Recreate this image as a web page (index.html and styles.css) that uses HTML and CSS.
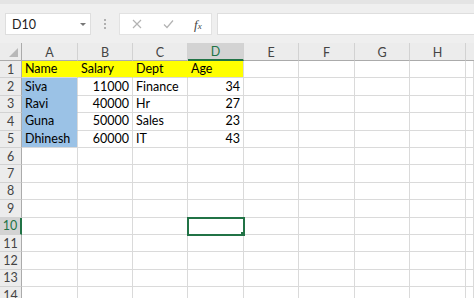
FILE: index.html
```html
<!DOCTYPE html>
<html>
<head>
<meta charset="utf-8">
<link rel="stylesheet" href="styles.css">
</head>
<body>
<div class="app">
  <div class="fbar">
    <div class="namebox"><span class="nb-text">D10</span><span class="nb-arrow"></span></div>
    <div class="grip"><i></i><i></i><i></i></div>
    <div class="fbtns">
      <svg class="ico" width="10" height="10" viewBox="0 0 10 10"><path d="M1 1L9 9M9 1L1 9" stroke="#b3b3b3" stroke-width="1.2" fill="none"/></svg>
      <svg class="ico" width="11" height="10" viewBox="0 0 11 10"><path d="M1 5.5L4 8.5L10 1.5" stroke="#b3b3b3" stroke-width="1.2" fill="none"/></svg>
      <span class="fx"><span class="fx-f">f</span><span class="fx-x">x</span></span>
    </div>
    <div class="finput"></div>
  </div>
  <div class="sheet">
    <div class="hd corner"><svg width="9" height="9" viewBox="0 0 9 9"><polygon points="9,0 9,9 0,9" fill="#b8b8b8"/></svg></div>
    <div class="hd col">A</div><div class="hd col">B</div><div class="hd col">C</div><div class="hd col sel">D</div><div class="hd col">E</div><div class="hd col">F</div><div class="hd col">G</div><div class="hd col">H</div><div class="hd col last"></div>

    <div class="hd row">1</div>
    <div class="c y">Name</div><div class="c y">Salary</div><div class="c y">Dept</div><div class="c y ye">Age</div><div class="c"></div><div class="c"></div><div class="c"></div><div class="c"></div><div class="c"></div>

    <div class="hd row">2</div>
    <div class="c b">Siva</div><div class="c n">11000</div><div class="c">Finance</div><div class="c n">34</div><div class="c"></div><div class="c"></div><div class="c"></div><div class="c"></div><div class="c"></div>

    <div class="hd row">3</div>
    <div class="c b">Ravi</div><div class="c n">40000</div><div class="c">Hr</div><div class="c n">27</div><div class="c"></div><div class="c"></div><div class="c"></div><div class="c"></div><div class="c"></div>

    <div class="hd row">4</div>
    <div class="c b">Guna</div><div class="c n">50000</div><div class="c">Sales</div><div class="c n">23</div><div class="c"></div><div class="c"></div><div class="c"></div><div class="c"></div><div class="c"></div>

    <div class="hd row">5</div>
    <div class="c b be">Dhinesh</div><div class="c n">60000</div><div class="c">IT</div><div class="c n">43</div><div class="c"></div><div class="c"></div><div class="c"></div><div class="c"></div><div class="c"></div>

    <div class="hd row">6</div>
    <div class="c"></div><div class="c"></div><div class="c"></div><div class="c"></div><div class="c"></div><div class="c"></div><div class="c"></div><div class="c"></div><div class="c"></div>
    <div class="hd row">7</div>
    <div class="c"></div><div class="c"></div><div class="c"></div><div class="c"></div><div class="c"></div><div class="c"></div><div class="c"></div><div class="c"></div><div class="c"></div>
    <div class="hd row">8</div>
    <div class="c"></div><div class="c"></div><div class="c"></div><div class="c"></div><div class="c"></div><div class="c"></div><div class="c"></div><div class="c"></div><div class="c"></div>
    <div class="hd row">9</div>
    <div class="c"></div><div class="c"></div><div class="c"></div><div class="c"></div><div class="c"></div><div class="c"></div><div class="c"></div><div class="c"></div><div class="c"></div>
    <div class="hd row sel">10</div>
    <div class="c"></div><div class="c"></div><div class="c"></div><div class="c active"></div><div class="c"></div><div class="c"></div><div class="c"></div><div class="c"></div><div class="c"></div>
    <div class="hd row">11</div>
    <div class="c"></div><div class="c"></div><div class="c"></div><div class="c"></div><div class="c"></div><div class="c"></div><div class="c"></div><div class="c"></div><div class="c"></div>
    <div class="hd row">12</div>
    <div class="c"></div><div class="c"></div><div class="c"></div><div class="c"></div><div class="c"></div><div class="c"></div><div class="c"></div><div class="c"></div><div class="c"></div>
    <div class="hd row">13</div>
    <div class="c"></div><div class="c"></div><div class="c"></div><div class="c"></div><div class="c"></div><div class="c"></div><div class="c"></div><div class="c"></div><div class="c"></div>
    <div class="hd row">14</div>
    <div class="c"></div><div class="c"></div><div class="c"></div><div class="c"></div><div class="c"></div><div class="c"></div><div class="c"></div><div class="c"></div><div class="c"></div>
  </div>
</div>
</body>
</html>
```
FILE: styles.css
```css
* { box-sizing: border-box; }
html, body { margin: 0; padding: 0; }
body {
  width: 474px;
  height: 298px;
  overflow: hidden;
  background: #ffffff;
  font-family: "Lato", "Liberation Sans", sans-serif;
  color: #000;
}
.app { width: 474px; height: 298px; overflow: hidden; }

.fbar {
  height: 43px;
  background: #efefef;
  border-top: 4px solid #e4e4e4;
  display: flex;
  align-items: flex-start;
  padding: 9px 0 0 5px;
}
.namebox {
  width: 86px;
  height: 22px;
  background: #fff;
  border: 1px solid #dedede;
  display: flex;
  align-items: center;
  justify-content: space-between;
  padding: 0 4px 0 6px;
  font-size: 12.5px;
  color: #222;
}
.nb-arrow {
  width: 0; height: 0;
  border-left: 3px solid transparent;
  border-right: 3px solid transparent;
  border-top: 3px solid #777;
}
.grip {
  width: 28px;
  height: 22px;
  display: flex;
  flex-direction: column;
  align-items: center;
  justify-content: center;
  gap: 2px;
}
.grip i { width: 2px; height: 2px; background: #b0b0b0; display: block; }
.fbtns {
  width: 93px;
  height: 22px;
  background: #fff;
  border: 1px solid #e2e2e2;
  display: flex;
  align-items: center;
  padding-left: 12px;
  gap: 0;
}
.fbtns .ico:first-child { margin-right: 21px; }
.fbtns .ico:nth-child(2) { margin-right: 20px; }
.fx { font-family: "Liberation Serif", serif; font-style: italic; color: #444; line-height: 1; }
.fx-f { font-size: 13px; }
.fx-x { font-size: 9px; }
.finput {
  flex: 1;
  margin-left: 5px;
  height: 22px;
  background: #fff;
  border: 1px solid #dedede;
  border-right: none;
}

.sheet {
  display: grid;
  grid-template-columns: 22px 56px 55px 55px 56px 55px 56px 55px 56px 1fr;
  grid-template-rows: 18px repeat(14, 17.4px);
}
.hd {
  background: #ececec;
  color: #444;
  font-size: 12.5px;
  display: flex;
  align-items: center;
  justify-content: center;
}
.col {
  border-right: 1px solid #d2d2d2;
  border-bottom: 1px solid #ababab;
  padding-top: 1px;
}
.col.last { border-right: none; }
.corner {
  border-right: 1px solid #ababab;
  border-bottom: 1px solid #ababab;
  justify-content: flex-end;
  align-items: flex-end;
  padding: 0 3px 3px 0;
}
.corner svg { display: block; }
.row {
  border-right: 1px solid #ababab;
  border-bottom: 1px solid #d2d2d2;
}
.hd.sel { background: #d3d3d3; color: #217346; }
.col.sel { border-bottom: 2px solid #217346; }
.row.sel { border-right: 2px solid #217346; }

.c {
  border-right: 1px solid #dadada;
  border-bottom: 1px solid #dadada;
  font-size: 12.5px;
  line-height: 16px;
  padding: 0 3px;
  white-space: nowrap;
  overflow: hidden;
  display: flex;
  align-items: center;
}
.c.n { justify-content: flex-end; }
.c.y { background: #ffff00; border-right-color: #ffff00; border-bottom-color: #dadada; }
.c.y.ye { border-right-color: #dadada; }
.c.b { background: #9bc2e6; border-bottom-color: #9bc2e6; border-right-color: #dadada; }
.c.b.be { border-bottom-color: #dadada; }
.c.active {
  position: relative;
  outline: 2px solid #217346;
  outline-offset: -1px;
  z-index: 2;
}
.c.active::after {
  content: "";
  position: absolute;
  right: -4px;
  bottom: -4px;
  width: 5px;
  height: 5px;
  background: #217346;
  border: 1px solid #fff;
}
```
